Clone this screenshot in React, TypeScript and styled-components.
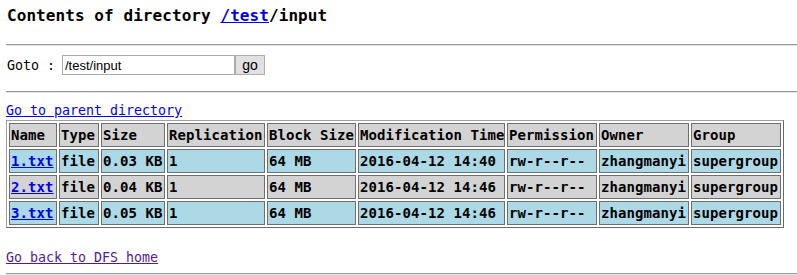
import React from "react";
import styled, { createGlobalStyle } from "styled-components";

const GlobalStyle = createGlobalStyle`
  html, body {
    margin: 0;
    padding: 0;
    background: #ffffff;
  }
  body {
    padding-left: 6px;
    font-family: "DejaVu Sans Mono", "Liberation Mono", monospace;
    color: #000000;
  }
`;

const Title = styled.h1`
  margin: 0;
  padding: 2px 0 0 1px;
  height: 28px;
  line-height: 28px;
  font-size: 16px;
  letter-spacing: 0.07px;
  font-weight: bold;
  white-space: nowrap;
`;

const Link = styled.a<{ $visited?: boolean }>`
  color: ${(p) => (p.$visited ? "#551a8b" : "#0000ee")};
  text-decoration: underline;
  cursor: pointer;
`;

const Rule = styled.hr<{ $top: number }>`
  margin: ${(p) => p.$top}px 0 0 0;
  border: 0;
  border-top: 1px solid #9a9a9a;
  border-bottom: 1px solid #e4e4e4;
  height: 0;
`;

const GotoRow = styled.form`
  display: flex;
  align-items: center;
  margin-top: 9px;
  height: 20px;
`;

const GotoLabel = styled.span`
  font-size: 13.3px;
  padding-left: 1px;
  width: 55px;
`;

const PathInput = styled.input`
  box-sizing: border-box;
  width: 173px;
  height: 20px;
  border: 1px solid #a9a9a9;
  padding: 1px 2px;
  font-family: "Liberation Sans", Arial, sans-serif;
  font-size: 13px;
  color: #000;
  outline: none;
`;

const GoButton = styled.button`
  box-sizing: border-box;
  width: 30px;
  height: 20px;
  border: 1px solid #adadad;
  background: #e1e1e1;
  padding: 0;
  font-family: "Liberation Sans", Arial, sans-serif;
  font-size: 14px;
  color: #000;
`;

const TextLine = styled.div<{ $top: number }>`
  margin-top: ${(p) => p.$top}px;
  height: 18px;
  line-height: 18px;
  font-size: 13.3px;
  white-space: nowrap;
`;

const Table = styled.table`
  box-sizing: border-box;
  width: 778px;
  table-layout: fixed;
  border-collapse: separate;
  border-spacing: 2px;
  border: 1px solid;
  border-color: #a0a0a0 #696969 #696969 #a0a0a0;
`;

const Col = styled.col<{ $w: number }>`
  width: ${(p) => p.$w}px;
`;

const Row = styled.tr<{ $shade: "gray" | "blue" }>`
  background: ${(p) => (p.$shade === "blue" ? "#add8e6" : "#d3d3d3")};
`;

const Cell = styled.td`
  box-sizing: border-box;
  height: 24px;
  padding: 0 1px;
  border: 1px solid #6e6e6e;
  font-size: 14px;
  font-weight: bold;
  letter-spacing: 0.07px;
  line-height: 22px;
  white-space: nowrap;
  overflow: hidden;
  text-align: left;
  vertical-align: middle;
`;

const HeadCell = styled(Cell).attrs({ as: "th" })``;

const widths = [48, 40, 64, 98, 89, 147, 90, 90, 90];
const headers = [
  "Name",
  "Type",
  "Size",
  "Replication",
  "Block Size",
  "Modification Time",
  "Permission",
  "Owner",
  "Group",
];

const files = [
  { name: "1.txt", size: "0.03 KB", time: "2016-04-12 14:40" },
  { name: "2.txt", size: "0.04 KB", time: "2016-04-12 14:46" },
  { name: "3.txt", size: "0.05 KB", time: "2016-04-12 14:46" },
];

export default function App() {
  return (
    <>
      <GlobalStyle />
      <Title>
        Contents of directory <Link>/test</Link>/input
      </Title>
      <Rule $top={14} />
      <GotoRow onSubmit={(e) => e.preventDefault()}>
        <GotoLabel>Goto :</GotoLabel>
        <PathInput defaultValue="/test/input" />
        <GoButton type="submit">go</GoButton>
      </GotoRow>
      <Rule $top={16} />
      <TextLine $top={9}>
        <Link>Go to parent directory</Link>
      </TextLine>
      <Table>
        <colgroup>
          {widths.map((w, i) => (
            <Col key={i} $w={w} />
          ))}
        </colgroup>
        <thead>
          <Row $shade="gray">
            {headers.map((h) => (
              <HeadCell key={h}>{h}</HeadCell>
            ))}
          </Row>
        </thead>
        <tbody>
          {files.map((f, i) => (
            <Row key={f.name} $shade={i % 2 === 0 ? "blue" : "gray"}>
              <Cell>
                <Link>{f.name}</Link>
              </Cell>
              <Cell>file</Cell>
              <Cell>{f.size}</Cell>
              <Cell>1</Cell>
              <Cell>64 MB</Cell>
              <Cell>{f.time}</Cell>
              <Cell>rw-r--r--</Cell>
              <Cell>zhangmanyi</Cell>
              <Cell>supergroup</Cell>
            </Row>
          ))}
        </tbody>
      </Table>
      <TextLine $top={21}>
        <Link $visited>Go back to DFS home</Link>
      </TextLine>
      <Rule $top={6} />
    </>
  );
}
